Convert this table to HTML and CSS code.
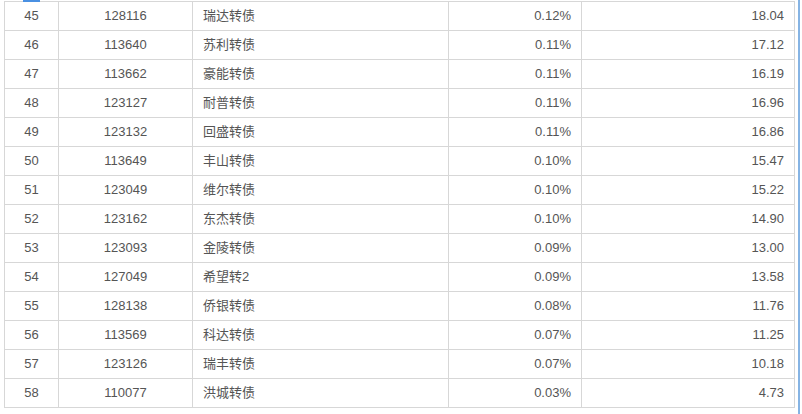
FILE: index.html
```html
<!DOCTYPE html>
<html>
<head>
<meta charset="utf-8">
<link rel="stylesheet" href="styles.css">
</head>
<body>
<div class="frame">
  <span class="tab-mark"></span>
  <table class="grid">
    <colgroup>
      <col class="c-idx"><col class="c-code"><col class="c-name"><col class="c-pct"><col class="c-val">
    </colgroup>
    <tbody>
      <tr><td class="ctr">45</td><td class="ctr">128116</td><td class="lft">瑞达转债</td><td class="rgt">0.12%</td><td class="rgt">18.04</td></tr>
      <tr><td class="ctr">46</td><td class="ctr">113640</td><td class="lft">苏利转债</td><td class="rgt">0.11%</td><td class="rgt">17.12</td></tr>
      <tr><td class="ctr">47</td><td class="ctr">113662</td><td class="lft">豪能转债</td><td class="rgt">0.11%</td><td class="rgt">16.19</td></tr>
      <tr><td class="ctr">48</td><td class="ctr">123127</td><td class="lft">耐普转债</td><td class="rgt">0.11%</td><td class="rgt">16.96</td></tr>
      <tr><td class="ctr">49</td><td class="ctr">123132</td><td class="lft">回盛转债</td><td class="rgt">0.11%</td><td class="rgt">16.86</td></tr>
      <tr><td class="ctr">50</td><td class="ctr">113649</td><td class="lft">丰山转债</td><td class="rgt">0.10%</td><td class="rgt">15.47</td></tr>
      <tr><td class="ctr">51</td><td class="ctr">123049</td><td class="lft">维尔转债</td><td class="rgt">0.10%</td><td class="rgt">15.22</td></tr>
      <tr><td class="ctr">52</td><td class="ctr">123162</td><td class="lft">东杰转债</td><td class="rgt">0.10%</td><td class="rgt">14.90</td></tr>
      <tr><td class="ctr">53</td><td class="ctr">123093</td><td class="lft">金陵转债</td><td class="rgt">0.09%</td><td class="rgt">13.00</td></tr>
      <tr><td class="ctr">54</td><td class="ctr">127049</td><td class="lft">希望转2</td><td class="rgt">0.09%</td><td class="rgt">13.58</td></tr>
      <tr><td class="ctr">55</td><td class="ctr">128138</td><td class="lft">侨银转债</td><td class="rgt">0.08%</td><td class="rgt">11.76</td></tr>
      <tr><td class="ctr">56</td><td class="ctr">113569</td><td class="lft">科达转债</td><td class="rgt">0.07%</td><td class="rgt">11.25</td></tr>
      <tr><td class="ctr">57</td><td class="ctr">123126</td><td class="lft">瑞丰转债</td><td class="rgt">0.07%</td><td class="rgt">10.18</td></tr>
      <tr><td class="ctr">58</td><td class="ctr">110077</td><td class="lft">洪城转债</td><td class="rgt">0.03%</td><td class="rgt">4.73</td></tr>
    </tbody>
  </table>
</div>
</body>
</html>
```

FILE: styles.css
```css
html, body {
  margin: 0;
  padding: 0;
  background: #ffffff;
}

.frame {
  position: relative;
  width: 800px;
  height: 414px;
  border-right: 2px solid #86b4e4;
  padding: 1px 0 0 4px;
  box-sizing: border-box;
  font-family: "Liberation Sans", Arial, "Noto Sans CJK SC", sans-serif;
  font-size: 13px;
  color: #555555;
}

.tab-mark {
  position: absolute;
  left: 23px;
  top: 0;
  width: 17px;
  height: 2px;
  background: #4a90e2;
}

.grid {
  border-collapse: collapse;
  table-layout: fixed;
  width: 790px;
}

.c-idx { width: 54px; }
.c-code { width: 134px; }
.c-name { width: 256px; }
.c-pct { width: 133px; }
.c-val { width: 213px; }

.grid td {
  border: 1px solid #d7d7d7;
  height: 28px;
  padding: 0 10px;
  box-sizing: border-box;
  line-height: 28px;
  white-space: nowrap;
}

.grid tr:first-child td {
  height: 29px;
}

.ctr { text-align: center; }
.lft { text-align: left; }
.rgt { text-align: right; }
```
